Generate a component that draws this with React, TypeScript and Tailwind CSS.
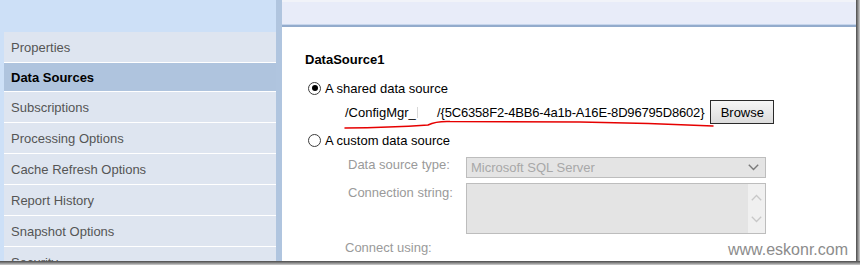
import React from "react";

const items: { label: string; h: string; selected?: boolean }[] = [
  { label: "Properties", h: "h-[30px]" },
  { label: "Data Sources", h: "h-[28px]", selected: true },
  { label: "Subscriptions", h: "h-[30px]" },
  { label: "Processing Options", h: "h-[30px]" },
  { label: "Cache Refresh Options", h: "h-[30px]" },
  { label: "Report History", h: "h-[30px]" },
  { label: "Snapshot Options", h: "h-[30px]" },
  { label: "Security", h: "h-[30px]" },
];

function Radio({ checked }: { checked?: boolean }) {
  return (
    <span className="w-[13px] h-[13px] rounded-full border border-[#3c3c3c] bg-white flex items-center justify-center shrink-0">
      {checked && <span className="w-[6px] h-[6px] rounded-full bg-black" />}
    </span>
  );
}

export default function App() {
  return (
    <div
      className="relative w-[860px] h-[265px] overflow-hidden bg-white flex flex-col"
      style={{ fontFamily: '"Liberation Sans", Arial, sans-serif' }}
    >
      <div className="flex flex-1 min-h-0">
        {/* Sidebar */}
        <div className="w-[276px] bg-[#cde0f7] pt-[32px] pl-[4px] flex flex-col overflow-hidden">
          {items.map((it, i) => (
            <div key={it.label} className="flex flex-col">
              <div
                className={`${it.h} flex items-center pl-[7px] pt-[1px] text-[13px] ${
                  it.selected ? "bg-[#afc4de] font-bold text-black" : "bg-[#dee5f0] text-[#555]"
                }`}
              >
                {it.label}
              </div>
              {i < items.length - 1 && <div className="h-[1px] bg-white" />}
            </div>
          ))}
        </div>
        {/* divider */}
        <div className="w-[6px] bg-[#b0c5df]" />
        {/* Main */}
        <div className="flex-1 flex flex-col min-w-0">
          <div className="h-[2px] bg-[#f1f3f9]" />
          <div className="h-[22px] bg-[#e8ecf9]" />
          <div className="h-[1px] bg-[#c6d5ec]" />
          <div className="h-[2px] bg-[#93abcc]" />
          <div className="flex-1 pl-[23px] pt-[25px] text-[13px] text-black leading-[15px]">
            <div className="font-bold h-[15px]">DataSource1</div>
            <div className="mt-[13px] h-[16px] flex items-center pl-[3px] gap-[4px]">
              <Radio checked />
              <span>A shared data source</span>
            </div>
            <div className="mt-[4px] h-[24px] flex items-center pl-[40px]">
              <span className="w-[92px] flex items-center">
                /ConfigMgr_
                <span className="ml-[1px] w-[1px] h-[11px] bg-[#d8d8d8]" />
              </span>
              <span className="tracking-[-0.17px]">/{"{"}5C6358F2-4BB6-4a1b-A16E-8D96795D8602{"}"}</span>
              <button className="ml-[6px] w-[64px] h-[24px] border border-[#2a2a2a] bg-gradient-to-b from-[#f6f6f6] to-[#dcdcdc] text-[13px] text-black flex items-center justify-center">
                Browse
              </button>
            </div>
            <div className="mt-[8px] h-[16px] flex items-center pl-[3px] gap-[4px]">
              <Radio />
              <span>A custom data source</span>
            </div>
            <div className="mt-[9px] flex items-start pl-[43px]">
              <div className="w-[118px] text-[#9a9a9a]">Data source type:</div>
              <div className="w-[300px] h-[21px] border border-[#bdbdbd] bg-[#e4e4e4] flex items-center pl-[4px] pr-[6px] text-[#a8a8a8]">
                <span className="flex-1">Microsoft SQL Server</span>
                <svg width="11" height="7" viewBox="0 0 11 7">
                  <path d="M0.8 0.8 L5.5 5.5 L10.2 0.8" fill="none" stroke="#7a7a7a" strokeWidth="1.4" />
                </svg>
              </div>
            </div>
            <div className="mt-[5px] flex items-start pl-[43px]">
              <div className="w-[118px] text-[#9a9a9a] pt-[2px]">Connection string:</div>
              <div className="w-[300px] h-[51px] border border-[#bdbdbd] bg-[#e4e4e4] flex justify-end">
                <div className="w-[17px] h-full bg-[#f0f0f0] flex flex-col items-center justify-between py-[10px]">
                  <svg width="11" height="7" viewBox="0 0 11 7">
                    <path d="M0.8 6.2 L5.5 1.5 L10.2 6.2" fill="none" stroke="#c8c8c8" strokeWidth="1.3" />
                  </svg>
                  <svg width="11" height="7" viewBox="0 0 11 7">
                    <path d="M0.8 0.8 L5.5 5.5 L10.2 0.8" fill="none" stroke="#c8c8c8" strokeWidth="1.3" />
                  </svg>
                </div>
              </div>
            </div>
            <div className="mt-[6px] pl-[40px] text-[#9a9a9a]">Connect using:</div>
          </div>
        </div>
        {/* right shadow */}
        <div className="w-[4px] bg-gradient-to-r from-[#4a4a4a] via-[#8a8a8a] to-[#d0d0d0]" />
      </div>
      <div className="h-[4px] bg-gradient-to-b from-[#4a4a4a] via-[#8a8a8a] to-[#d0d0d0]" />

      {/* watermark */}
      <div className="absolute right-[12px] top-[240px] text-[16px] leading-[20px] text-[#8c8c8c]">
        www.eskonr.com
      </div>

      {/* red hand-drawn underline */}
      <svg className="absolute left-0 top-0 pointer-events-none" width="860" height="265">
        <path
          d="M345 128 Q390 127.5 428 125 Q436 121 450 121.5 L580 122 Q650 123 713 126"
          fill="none"
          stroke="#e60000"
          strokeWidth="1.5"
          strokeLinecap="round"
        />
      </svg>
    </div>
  );
}
